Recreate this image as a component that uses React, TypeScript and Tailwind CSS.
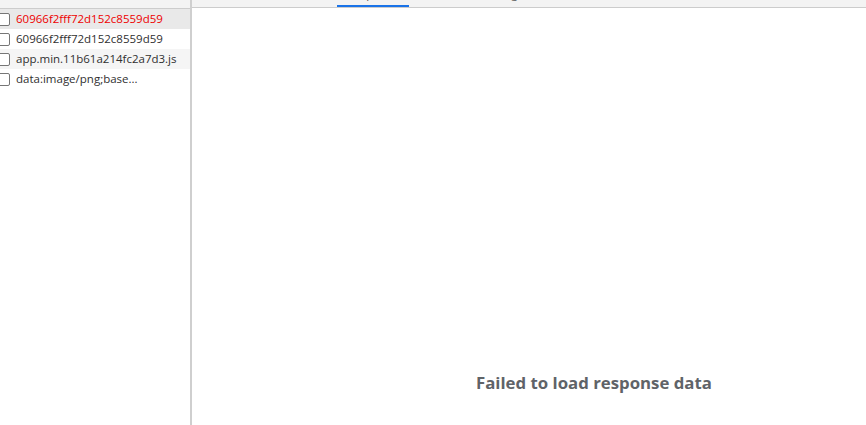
const rows = [
  { name: "60966f2fff72d152c8559d59", bg: "bg-[#e9e9e9]", text: "text-[#ee0000]" },
  { name: "60966f2fff72d152c8559d59", bg: "bg-white", text: "text-[#303030]" },
  { name: "app.min.11b61a214fc2a7d3.js", bg: "bg-[#f5f5f5]", text: "text-[#303030]" },
  { name: "data:image/png;base...", bg: "bg-white", text: "text-[#303030]" },
];

const tabs = ["Headers", "Preview", "Response", "Initiator", "Timing"];

export default function App() {
  return (
    <div className="flex h-[425px] w-[866px] overflow-hidden bg-white font-['Open_Sans',sans-serif]">
      {/* request list */}
      <div className="flex w-[192px] shrink-0 flex-col border-r-2 border-[#cfcfcf]">
        <div className="h-[9px] shrink-0 border-b border-[#cccccc] bg-[#f3f3f3]" />
        {rows.map((r, i) => (
          <div key={i} className={`flex h-[20px] items-center ${r.bg}`}>
            <div className="ml-[-3px] h-[13px] w-[13px] shrink-0 rounded-[2px] border border-[#767676] bg-white" />
            <span className={`ml-[6px] whitespace-nowrap text-[11.5px] leading-none ${r.text}`}>{r.name}</span>
          </div>
        ))}
      </div>

      {/* detail panel */}
      <div className="flex flex-1 flex-col">
        <div className="h-[8px] shrink-0 overflow-hidden border-b border-[#cccccc] bg-[#f3f3f3]">
          <div className="mt-[-16px] flex pl-[18px]">
            {tabs.map((t) => (
              <div
                key={t}
                className={`flex h-[23px] items-start px-[10px] pt-[2px] text-[11.5px] leading-[16px] text-[#555] ${
                  t === "Response" ? "border-b-2 border-[#1a73e8]" : ""
                }`}
              >
                {t}
              </div>
            ))}
          </div>
        </div>
        <div className="flex-1 pl-[284px] pt-[363px]">
          <span className="whitespace-nowrap text-[16.8px] font-bold leading-none text-[#5f6368]">
            Failed to load response data
          </span>
        </div>
      </div>
    </div>
  );
}
